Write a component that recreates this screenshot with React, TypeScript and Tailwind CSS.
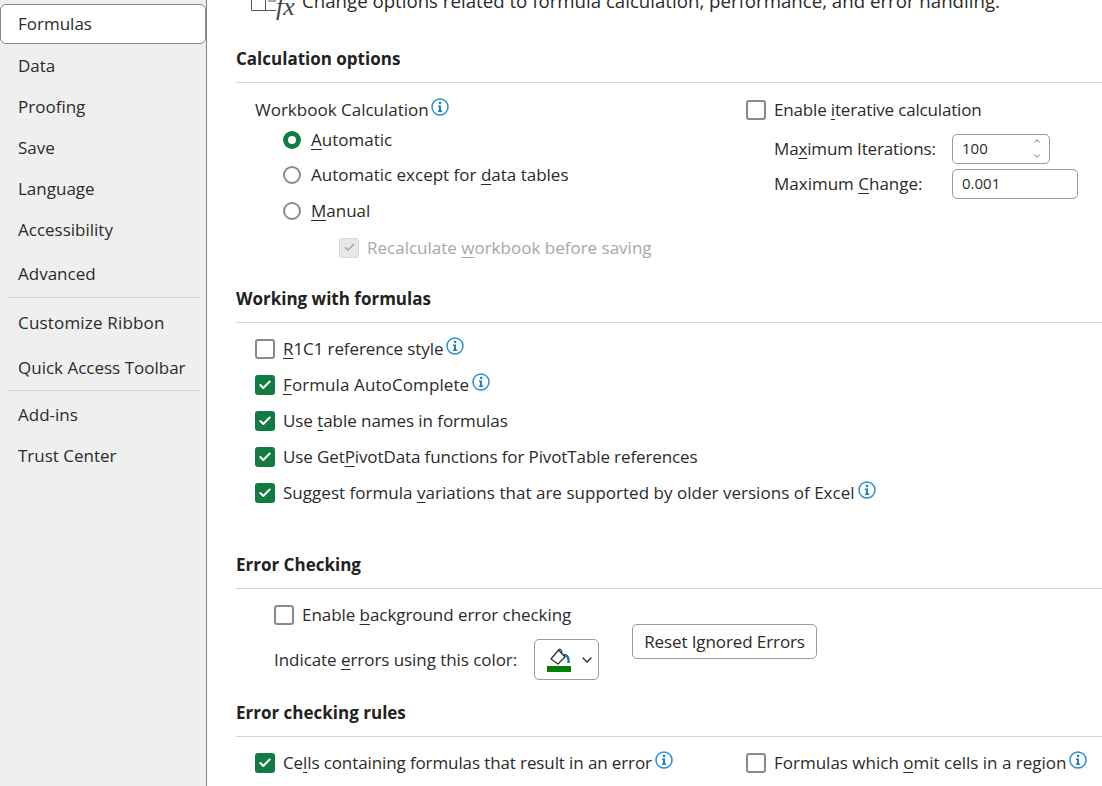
import { ReactNode } from "react";
import { Check, ChevronDown, ChevronUp } from "lucide-react";

const font = "font-['Open_Sans','Noto_Sans',sans-serif]";

function Key({ children }: { children: ReactNode }) {
  return <span className="underline decoration-1 underline-offset-[3px]">{children}</span>;
}

function Tip({ cls = "ml-[3px]" }: { cls?: string }) {
  return (
    <svg width="18" height="18" viewBox="0 0 18 18" className={`-mt-1.5 shrink-0 ${cls}`}>
      <circle cx="9" cy="9" r="8" fill="#fff" stroke="#2b8fd8" strokeWidth="1.5" />
      <rect x="7.9" y="3.8" width="2.3" height="2.3" fill="#1f7fc9" />
      <path d="M7 7.6 H10 V12.6 H11.2 V14 H7 V12.6 H8 V9 H7 Z" fill="#1f7fc9" />
    </svg>
  );
}

function Box({ on, off }: { on?: boolean; off?: boolean }) {
  if (off)
    return (
      <span className="flex size-[20px] shrink-0 items-center justify-center rounded-[3px] border border-[#d6d6d6] bg-[#e8e8e8] text-[#9a9a9a]">
        <Check size={13} strokeWidth={2} />
      </span>
    );
  if (on)
    return (
      <span className="flex size-[20px] shrink-0 items-center justify-center rounded-[3px] bg-[#107c41] text-white">
        <Check size={14} strokeWidth={3.5} />
      </span>
    );
  return <span className="size-[20px] shrink-0 rounded-[3px] border-2 border-[#8a8a8a] bg-white" />;
}

function Radio({ on }: { on?: boolean }) {
  return on ? (
    <span className="size-[18px] shrink-0 rounded-full border-[5px] border-[#107c41] bg-white" />
  ) : (
    <span className="size-[18px] shrink-0 rounded-full border-2 border-[#8a8a8a] bg-white" />
  );
}

function Heading({ children }: { children: ReactNode }) {
  return (
    <div className="flex h-[48px] items-center border-b border-[#d4d4d4] pt-[1px] text-[17px] font-bold text-[#222]">
      {children}
    </div>
  );
}

function Row({
  icon,
  children,
  tip,
  cls,
  gap = "gap-2",
}: {
  icon: ReactNode;
  children: ReactNode;
  tip?: boolean;
  cls: string;
  gap?: string;
}) {
  return (
    <div className={`flex items-center ${gap} ${cls}`}>
      {icon}
      <span className="flex items-center whitespace-nowrap">
        <span>{children}</span>
        {tip && <Tip />}
      </span>
    </div>
  );
}

function NavItem({ label, cls = "h-[41px]" }: { label: string; cls?: string }) {
  return <div className={`flex items-center pl-[18px] ${cls}`}>{label}</div>;
}

function NavLine() {
  return <div className="mx-[7px] h-px bg-[#d0d0d0]" />;
}

function Sidebar() {
  return (
    <aside className="flex h-full w-[207px] shrink-0 flex-col border-r border-[#808080] bg-[#efefef] pt-1">
      <div className="mb-[1px] flex h-[40px] w-[206px] items-center rounded-md border border-[#8a8a8a] bg-white pl-[17px]">
        Formulas
      </div>
      <NavItem label="Data" />
      <NavItem label="Proofing" />
      <NavItem label="Save" />
      <NavItem label="Language" />
      <NavItem label="Accessibility" />
      <NavItem label="Advanced" cls="h-[46px] mt-[1px]" />
      <NavLine />
      <NavItem label="Customize Ribbon" cls="h-[47px] mt-[1px] tracking-[0.18px]" />
      <NavItem label="Quick Access Toolbar" cls="h-[44px]" />
      <NavLine />
      <NavItem label="Add-ins" cls="h-[48px]" />
      <NavItem label="Trust Center" cls="h-[34px]" />
    </aside>
  );
}

function Spinner() {
  return (
    <div className="flex h-[30px] w-[98px] items-center justify-between rounded-[5px] border border-[#9a9a9a] pl-[9px] pr-[7px] text-[15px]">
      100
      <span className="flex flex-col gap-[5px] text-[#555]">
        <ChevronUp size={10} />
        <ChevronDown size={10} />
      </span>
    </div>
  );
}

function BucketIcon() {
  return (
    <svg width="24" height="25" viewBox="0 0 24 25" className="shrink-0">
      <path d="M16 8 C20.5 7.5 22 10.5 21.5 16" fill="none" stroke="#1d6fb5" strokeWidth="2.4" />
      <path d="M4 12 L11.5 3 L18 10 L11 17 Z" fill="#fff" stroke="#333" strokeWidth="1.3" strokeLinejoin="round" />
      <path d="M11.5 3 C13 1.5 14.5 2 15 6" fill="none" stroke="#333" strokeWidth="1.2" />
      <rect x="0" y="19" width="24" height="6" fill="#008000" />
    </svg>
  );
}

export default function App() {
  return (
    <div className={`flex h-[786px] w-[1102px] overflow-hidden bg-white text-[17px] text-[#2b2b2b] ${font}`}>
      <Sidebar />
      <main className="min-w-0 flex-1 pl-[29px]">
        <div className="-mt-[18px] flex h-[36px] items-center whitespace-nowrap pl-[14px]">
          <svg width="26" height="36" viewBox="0 0 26 36" className="shrink-0">
            <path d="M1.5 10 V28.5 H26 M15.5 10 V28.5 M18 19 H26" fill="none" stroke="#555" strokeWidth="1" />
          </svg>
          <span className="mt-[13px] w-[20px] shrink-0 font-['Liberation_Serif',serif] text-[26px] italic text-[#444]">fx</span>
          <span className="ml-[6px] mt-[1px] text-[18.66px]">Change options related to formula calculation, performance, and error handling.</span>
        </div>
        <div className="mt-[17px]">
          <Heading>Calculation options</Heading>
        </div>
        <div className="flex">
          <div className="w-[510px] shrink-0 pl-[19px]">
            <div className="flex h-[54px] items-center">
              Workbook Calculation
              <Tip cls="ml-[2px]" />
            </div>
            <div className="pl-[28px]">
              <Row cls="-mt-[15px] h-[35px]" gap="gap-[10px]" icon={<Radio on />}><Key>A</Key>utomatic</Row>
              <Row cls="h-[36px]" gap="gap-[10px]" icon={<Radio />}>Automatic except for <Key>d</Key>ata tables</Row>
              <Row cls="h-[36px]" gap="gap-[10px]" icon={<Radio />}><Key>M</Key>anual</Row>
              <Row cls="h-[37px] pl-[56px] text-[#a8a8a8]" icon={<Box off />}>Recalculate <Key>w</Key>orkbook before saving</Row>
            </div>
          </div>
          <div className="flex-1">
            <Row cls="mt-[9px] h-[36px] tracking-[-0.17px]" icon={<Box />}>Enable <Key>i</Key>terative calculation</Row>
            <div className="mt-[3px] flex h-[35px] items-center pl-[28px]">
              <span className="w-[178px] tracking-[-0.15px]">Ma<Key>x</Key>imum Iterations:</span>
              <Spinner />
            </div>
            <div className="flex h-[35px] items-center pl-[28px]">
              <span className="w-[178px]">Maximum <Key>C</Key>hange:</span>
              <div className="flex h-[30px] w-[126px] items-center rounded-[5px] border border-[#9a9a9a] pl-[9px] text-[15px]">0.001</div>
            </div>
          </div>
        </div>

        <div className="mt-[9px]">
          <Heading>Working with formulas</Heading>
        </div>
        <div className="pl-[19px] pt-[8px]">
          <Row cls="h-[36px] tracking-[-0.1px]" tip icon={<Box />}><Key>R</Key>1C1 reference style</Row>
          <Row cls="h-[36px] tracking-[0.1px]" tip icon={<Box on />}><Key>F</Key>ormula AutoComplete</Row>
          <Row cls="h-[36px] tracking-[-0.06px]" icon={<Box on />}>Use <Key>t</Key>able names in formulas</Row>
          <Row cls="h-[36px] tracking-[-0.11px]" icon={<Box on />}>Use Get<Key>P</Key>ivotData functions for PivotTable references</Row>
          <Row cls="h-[36px] tracking-[0.025px]" tip icon={<Box on />}>Suggest formula <Key>v</Key>ariations that are supported by older versions of Excel</Row>
        </div>

        <div className="mt-[30px]">
          <Heading>Error Checking</Heading>
        </div>
        <div className="flex pl-[38px]">
          <div className="w-[358px] shrink-0">
            <Row cls="mt-[8px] h-[36px] tracking-[-0.06px]" icon={<Box />}>Enable <Key>b</Key>ackground error checking</Row>
            <div className="mt-[6px] flex items-center">
              <span className="w-[260px] whitespace-nowrap tracking-[-0.06px]">Indicate <Key>e</Key>rrors using this color:</span>
              <div className="flex h-[41px] w-[65px] items-center gap-[8px] rounded-[5px] border border-[#9a9a9a] pl-[12px]">
                <BucketIcon />
                <ChevronDown size={16} strokeWidth={2} className="shrink-0" />
              </div>
            </div>
          </div>
          <div className="pt-[35px]">
            <div className="flex h-[35px] w-[185px] items-center justify-center whitespace-nowrap rounded-[5px] border border-[#9a9a9a] tracking-[-0.1px]">
              Reset I<Key>g</Key>nored Errors
            </div>
          </div>
        </div>

        <div className="mt-[9px]">
          <Heading>Error checking rules</Heading>
        </div>
        <div className="flex pl-[19px] pt-[8px]">
          <div className="w-[491px] shrink-0">
            <Row cls="h-[36px] tracking-[-0.11px]" tip icon={<Box on />}>Ce<Key>l</Key>ls containing formulas that result in an error</Row>
          </div>
          <Row cls="h-[36px]" tip icon={<Box />}>Formulas which <Key>o</Key>mit cells in a region</Row>
        </div>
      </main>
    </div>
  );
}
